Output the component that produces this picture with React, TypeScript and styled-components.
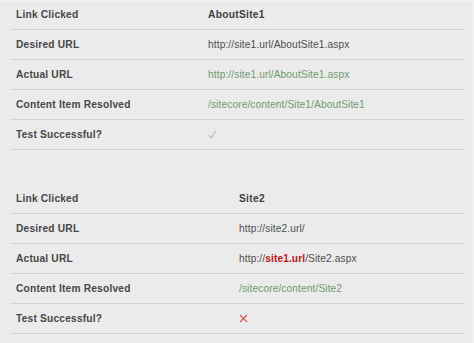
import React from 'react'
import styled, { createGlobalStyle } from 'styled-components'

const GlobalStyle = createGlobalStyle`
  html, body {
    margin: 0;
    padding: 0;
    background: #ebebeb;
  }
  body {
    font-family: "Liberation Sans", Arial, sans-serif;
  }
`

const Page = styled.main`
  width: 474px;
  height: 343px;
  box-sizing: border-box;
  padding: 0 10px;
  background: #ebebeb;
  box-shadow: inset 0 2px 0 #f0f0f0, inset -2px 0 0 #f1f1f1;
  overflow: hidden;
`

const Table = styled.section<{ $labelWidth: number }>`
  display: grid;
  grid-template-columns: ${({ $labelWidth }) => $labelWidth}px 1fr;
  width: 454px;
  & + & {
    margin-top: 34px;
  }
`

const Cell = styled.div`
  height: 29px;
  display: flex;
  align-items: center;
  border-bottom: 1px solid #d3d3d3;
  font-size: 10.2px;
  letter-spacing: 0.1px;
  color: #4a4a4a;
  white-space: nowrap;
`

const Label = styled(Cell)`
  padding-left: 6px;
  font-weight: 700;
  color: #474747;
  letter-spacing: 0.2px;
`

const Value = styled(Cell)<{ $tone?: 'plain' | 'green' | 'head' }>`
  font-weight: ${({ $tone }) => ($tone === 'head' ? 700 : 400)};
  color: ${({ $tone }) => ($tone === 'green' ? '#6d9c6d' : $tone === 'head' ? '#3f3f3f' : '#4f4f4f')};
  letter-spacing: ${({ $tone }) => ($tone === 'head' ? '0.3px' : '0.1px')};
`

const Wrong = styled.span`
  color: #c4161c;
  font-weight: 700;
`

const Mark = styled.svg`
  display: block;
`

const Check = () => (
  <Mark width="9" height="9" viewBox="0 0 9 9">
    <path d="M0.8 5.2 L3 8 L8.2 0.6" fill="none" stroke="#a3a3a3" strokeWidth="0.9" />
  </Mark>
)

const Cross = () => (
  <Mark width="9" height="9" viewBox="0 0 9 9">
    <path d="M1 1 L8 8 M8 1 L1 8" fill="none" stroke="#dc5257" strokeWidth="1.15" />
  </Mark>
)

interface Result {
  link: string
  desired: string
  actual: React.ReactNode
  actualTone: 'plain' | 'green'
  content: string
  ok: boolean
  labelWidth: number
}

const results: Result[] = [
  {
    link: 'AboutSite1',
    desired: 'http://site1.url/AboutSite1.aspx',
    actual: 'http://site1.url/AboutSite1.aspx',
    actualTone: 'green',
    content: '/sitecore/content/Site1/AboutSite1',
    ok: true,
    labelWidth: 198,
  },
  {
    link: 'Site2',
    desired: 'http://site2.url/',
    actual: (
      <>
        http://<Wrong>site1.url</Wrong>/Site2.aspx
      </>
    ),
    actualTone: 'plain',
    content: '/sitecore/content/Site2',
    ok: false,
    labelWidth: 229,
  },
]

const ResultTable: React.FC<{ r: Result }> = ({ r }) => (
  <Table $labelWidth={r.labelWidth}>
    <Label>Link Clicked</Label>
    <Value $tone="head">{r.link}</Value>
    <Label>Desired URL</Label>
    <Value>{r.desired}</Value>
    <Label>Actual URL</Label>
    <Value $tone={r.actualTone}>{r.actual}</Value>
    <Label>Content Item Resolved</Label>
    <Value $tone="green">{r.content}</Value>
    <Label>Test Successful?</Label>
    <Value>{r.ok ? <Check /> : <Cross />}</Value>
  </Table>
)

const App: React.FC = () => (
  <>
    <GlobalStyle />
    <Page>
      {results.map((r) => (
        <ResultTable key={r.link} r={r} />
      ))}
    </Page>
  </>
)

export default App
